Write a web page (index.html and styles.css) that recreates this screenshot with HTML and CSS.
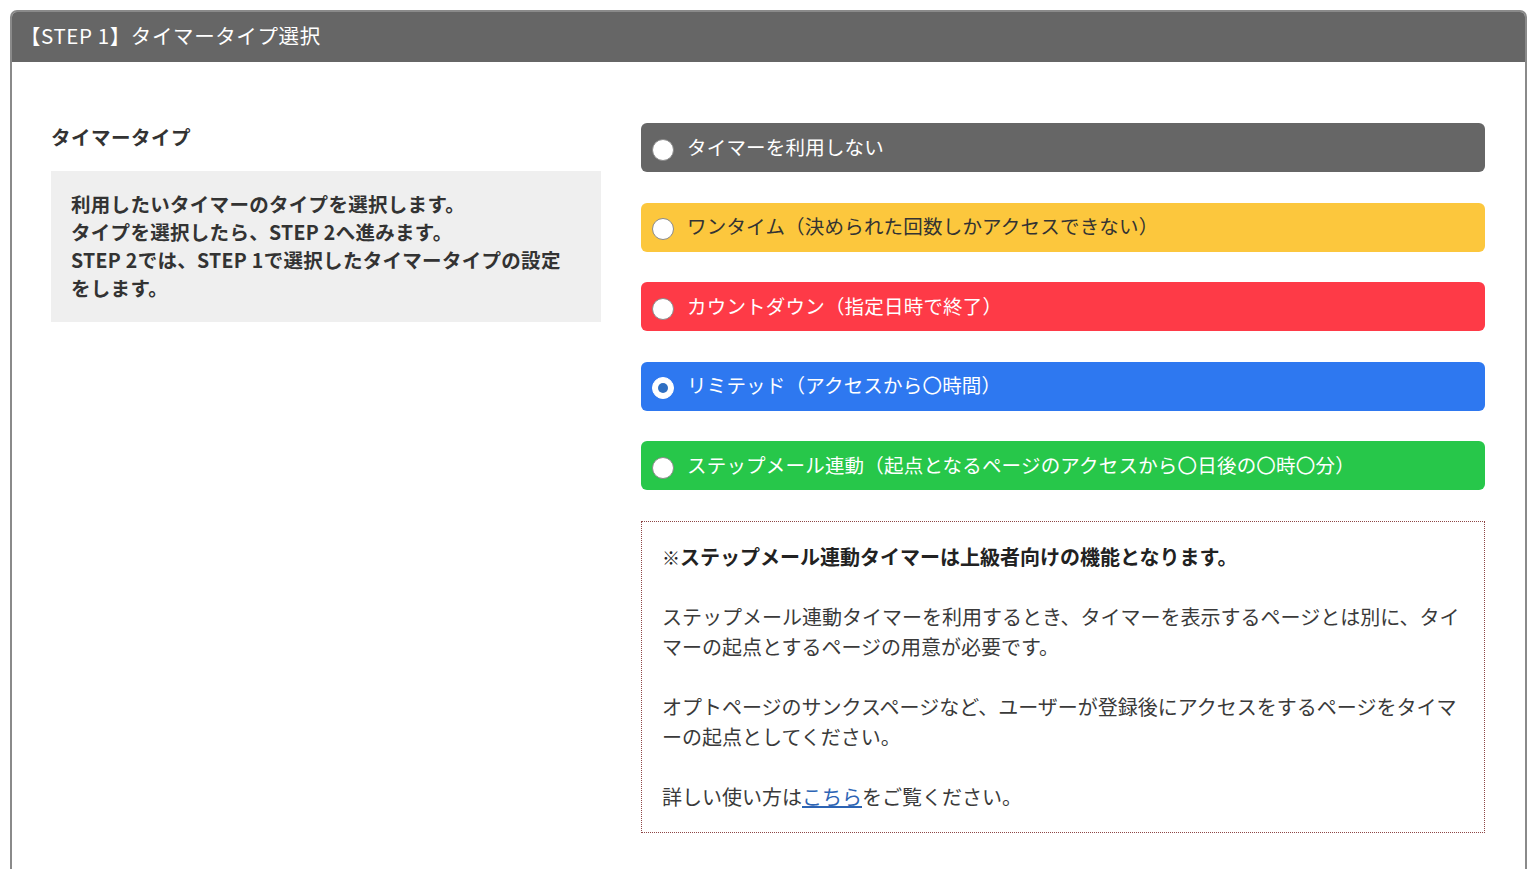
FILE: index.html
```html
<!DOCTYPE html>
<html lang="ja">
<head>
<meta charset="utf-8">
<title>STEP 1 タイマータイプ選択</title>
<link rel="stylesheet" href="styles.css">
</head>
<body>
<section class="panel">
  <header class="panel-head">【STEP 1】タイマータイプ選択</header>
  <div class="panel-body">
    <div class="side">
      <h3 class="side-title">タイマータイプ</h3>
      <div class="side-desc">
        利用したいタイマーのタイプを選択します。<br>
        タイプを選択したら、STEP 2へ進みます。<br>
        STEP 2では、STEP 1で選択したタイマータイプの設定をします。
      </div>
    </div>
    <div class="main">
      <label class="opt opt-none"><span class="radio"></span><span class="opt-text">タイマーを利用しない</span></label>
      <label class="opt opt-once"><span class="radio"></span><span class="opt-text">ワンタイム（決められた回数しかアクセスできない）</span></label>
      <label class="opt opt-count"><span class="radio"></span><span class="opt-text">カウントダウン（指定日時で終了）</span></label>
      <label class="opt opt-limited"><span class="radio checked"></span><span class="opt-text">リミテッド（アクセスから〇時間）</span></label>
      <label class="opt opt-step"><span class="radio"></span><span class="opt-text">ステップメール連動（起点となるページのアクセスから〇日後の〇時〇分）</span></label>
      <div class="note">
        <p class="note-head"><span class="kome">※</span>ステップメール連動タイマーは上級者向けの機能となります。</p>
        <p>ステップメール連動タイマーを利用するとき、タイマーを表示するページとは別に、タイマーの起点とするページの用意が必要です。</p>
        <p>オプトページのサンクスページなど、ユーザーが登録後にアクセスをするページをタイマーの起点としてください。</p>
        <p>詳しい使い方は<a href="#" class="link">こちら</a>をご覧ください。</p>
      </div>
    </div>
  </div>
</section>
</body>
</html>
```
FILE: styles.css
```css
* { box-sizing: border-box; }
html, body { background: #fff; }
body {
  margin: 0;
  font-family: "Noto Sans CJK JP", "Noto Sans", sans-serif;
  color: #333;
}
.panel {
  margin: 10px 9px 0 10px;
  border: 2px solid #8a8a8a;
  border-bottom: none;
  border-radius: 7px 7px 0 0;
  overflow: hidden;
  min-height: 870px;
}
.panel-head {
  background: #666;
  color: #fff;
  height: 52px;
  line-height: 50px;
  font-size: 20.5px;
  letter-spacing: 0.6px;
  padding-left: 9px;
  margin: -2px -1px 0;
}
.panel-body {
  display: grid;
  grid-template-columns: 550px 1fr;
  gap: 40px;
  padding: 61px 40px 0 39px;
}
.side-title {
  margin: 0 0 20px;
  font-size: 19.5px;
  letter-spacing: 0.5px;
  font-weight: bold;
  line-height: 28px;
  color: #333;
}
.side-desc {
  background: #efefef;
  padding: 19px 30px 20px 20px;
  font-size: 19.5px;
  letter-spacing: 0.3px;
  font-weight: bold;
  line-height: 28px;
  color: #333;
}
.main { display: flex; flex-direction: column; }
.opt {
  display: flex;
  align-items: center;
  height: 49px;
  margin-bottom: 30.5px;
  border-radius: 6px;
  padding-left: 11px;
  color: #fff;
  font-size: 19.5px;
  letter-spacing: 0.2px;
  cursor: pointer;
}
.opt-none { background: #666; }
.opt-once { background: #fcc73d; color: #333; }
.opt-count { background: #fe3a47; }
.opt-limited { background: #2e78f0; }
.opt-step { background: #27c74a; }
.radio {
  flex: none;
  width: 22px;
  height: 22px;
  border-radius: 50%;
  background: #fff;
  border: 1px solid #8a8a8a;
  margin-top: 4px;
  margin-right: 13px;
  position: relative;
}
.radio.checked { border-color: #fff; }
.radio.checked::after {
  content: "";
  position: absolute;
  left: 5px;
  top: 5px;
  width: 10px;
  height: 10px;
  border-radius: 50%;
  background: #2f6fc2;
}
.opt-text { line-height: 1; padding-bottom: 2px; }
.note {
  margin-top: 0.5px;
  border: 1px dotted #8e4646;
  padding: 20px 20px 20px;
  font-size: 20px;
  line-height: 30px;
  color: #3a3a3a;
}
.note p { margin: 0 0 30px; }
.note p:last-child { margin-bottom: 0; }
.note .note-head { font-weight: bold; color: #222; }
.kome { font-size: 18px; }
.link { color: #2d64b4; text-decoration: underline; }
```
